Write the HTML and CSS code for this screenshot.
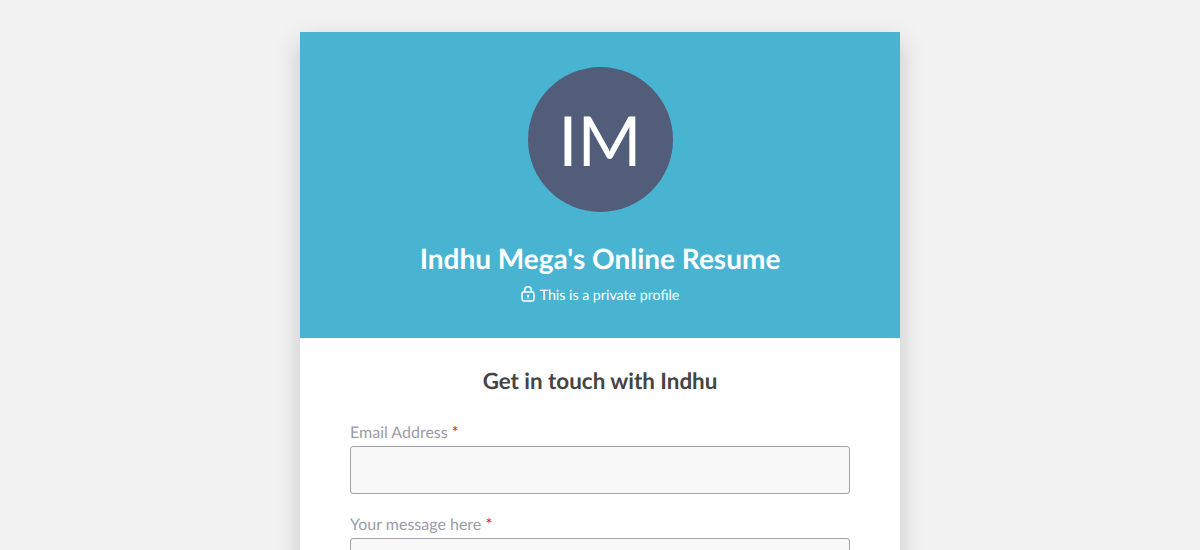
FILE: index.html
```html
<!DOCTYPE html>
<html lang="en">
<head>
<meta charset="utf-8">
<title>Indhu Mega's Online Resume</title>
<link rel="stylesheet" href="styles.css">
</head>
<body>
<main class="card">
  <header class="hero">
    <div class="avatar">IM</div>
    <h1 class="hero-title">Indhu Mega's Online Resume</h1>
    <p class="privacy">
      <svg class="lock" viewBox="0 0 16 18" width="14" height="16" fill="none" stroke="currentColor" stroke-width="1.7">
        <rect x="1.2" y="6.8" width="13.6" height="10.2" rx="2"/>
        <path d="M4.2 6.8V4.6a3.8 3.8 0 0 1 7.6 0v2.2"/>
        <circle cx="8" cy="11.2" r="1.4" fill="currentColor" stroke="none"/>
        <path d="M8 11.4v2.6" stroke-width="1.3"/>
      </svg>
      <span>This is a private profile</span>
    </p>
  </header>
  <section class="contact">
    <h2 class="contact-title">Get in touch with Indhu</h2>
    <form class="form">
      <div class="field">
        <label class="label">Email Address <span class="req">*</span></label>
        <div class="input"></div>
      </div>
      <div class="field">
        <label class="label">Your message here <span class="req">*</span></label>
        <div class="input input-tall"></div>
      </div>
    </form>
  </section>
</main>
</body>
</html>
```
FILE: styles.css
```css
* { box-sizing: border-box; }
body {
  margin: 0;
  height: 550px;
  overflow: hidden;
  background: #f2f2f2;
  font-family: Lato, sans-serif;
  padding-top: 32px;
  text-rendering: geometricPrecision;
}
.card {
  width: 600px;
  margin: 0 auto;
  background: #fff;
  box-shadow: 0 10px 25px rgba(0, 0, 0, 0.18);
}
.hero {
  height: 306px;
  background: #48b4d2;
  color: #fff;
  padding-top: 35px;
  display: flex;
  flex-direction: column;
  align-items: center;
}
.avatar {
  width: 145px;
  height: 145px;
  border-radius: 50%;
  background: #525e79;
  display: flex;
  align-items: center;
  justify-content: center;
  font-size: 69px;
  line-height: 1;
}
.hero-title {
  margin: 28px 0 0;
  font-size: 28px;
  line-height: 36px;
  font-weight: 700;
}
.privacy {
  margin: 10px 0 0;
  display: flex;
  align-items: center;
  gap: 5px;
  font-size: 14.2px;
  line-height: 20px;
}
.lock { display: block; margin-top: -4px; }
.contact { padding: 28px 50px 0; }
.contact-title {
  margin: 0 0 25px;
  text-align: center;
  font-size: 22.4px;
  line-height: 30px;
  font-weight: 700;
  color: #444;
}
.field { margin-bottom: 19px; }
.label {
  display: block;
  font-size: 16px;
  line-height: 24px;
  color: #9b9da6;
  margin-bottom: 1px;
}
.req { color: #b8223c; }
.input {
  height: 48px;
  background: #f8f8f9;
  border: 1px solid #a0a0b0;
  border-radius: 3px;
}
.input-tall { height: 120px; }
```
